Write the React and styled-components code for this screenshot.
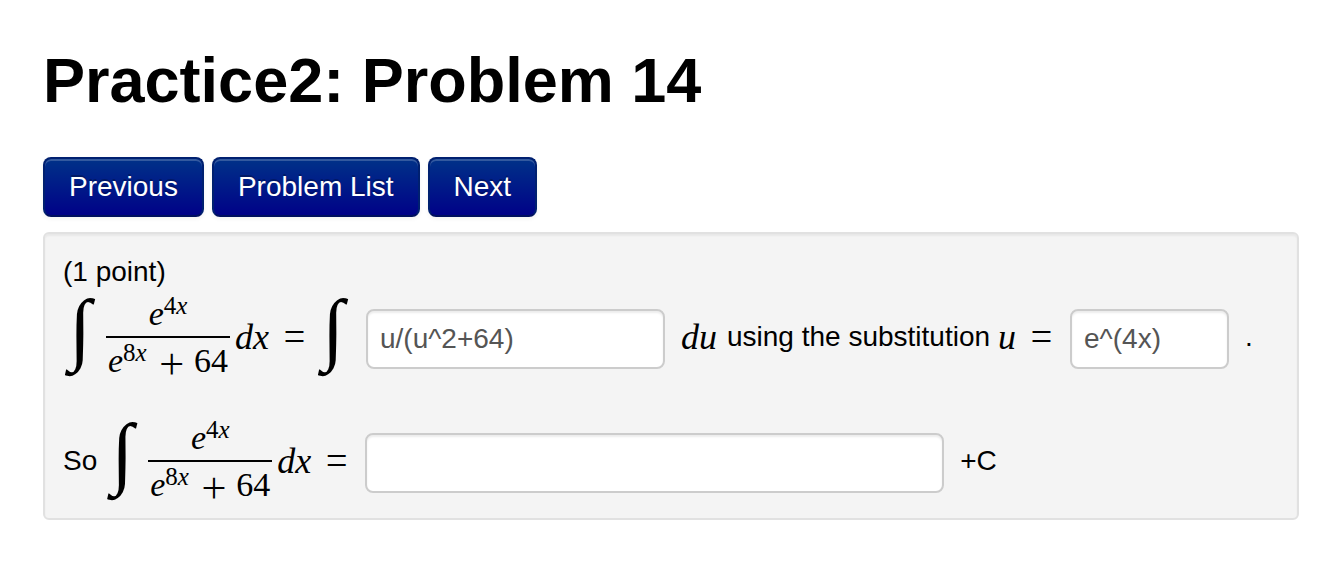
import styled, { createGlobalStyle } from 'styled-components';

const App = () => (
  <>
    <GlobalStyle />
    <Page>
      <Title>Practice2: Problem 14</Title>
      <Nav>
        <NavButton type="button">Previous</NavButton>
        <NavButton type="button">Problem List</NavButton>
        <NavButton type="button">Next</NavButton>
      </Nav>
      <Problem>
        <Points>(1 point)</Points>
        <Row>
          <Integrand />
          <Integral>∫</Integral>
          <Answer aria-label="Integrand in u" $width={299} defaultValue="u/(u^2+64)" />
          <Variable>du</Variable>
          <Words>using the substitution</Words>
          <Variable>u</Variable>
          <Operator>=</Operator>
          <Answer aria-label="Substitution for u" $width={159} defaultValue="e^(4x)" />
          <Words>.</Words>
        </Row>
        <Row>
          <Words>So</Words>
          <Integrand />
          <Answer aria-label="Antiderivative" $width={579} />
          <Words>+C</Words>
        </Row>
      </Problem>
    </Page>
  </>
);

export default App;

const Power = ({exponent}) => (
  <span><i>e</i><Sup>{exponent}<i>x</i></Sup></span>
)

const Integrand = () => (
  <Expression>
    <Integral>∫</Integral>
    <Fraction>
      <Numerator><Power exponent="4" /></Numerator>
      <Denominator>
        <Power exponent="8" />
        <Operator>+</Operator>
        <span>64</span>
      </Denominator>
    </Fraction>
    <Variable>dx</Variable>
    <Operator>=</Operator>
  </Expression>
)

const GlobalStyle = createGlobalStyle`
* {
  box-sizing: border-box;
}
body {
  margin: 0;
  background: #fff;
  color: #000;
  font-family: "Liberation Sans", Arial, sans-serif;
  font-size: 28px;
  line-height: 40px;
}
`
const Page = styled.main`
padding: 40px 35px 40px 43px;
`
const Title = styled.h1`
margin: 0 0 37px;
font-size: 63px;
line-height: 80px;
`
const Nav = styled.nav`
display: flex;
flex-wrap: wrap;
gap: 8px;
margin-bottom: 15px;
`
const NavButton = styled.button`
height: 60px;
padding: 0 24px;
border: 2px solid #002070;
border-bottom-color: #001060;
border-radius: 8px;
background: linear-gradient(#003388, #000088) border-box;
box-shadow: inset 0 2px 0 rgba(255, 255, 255, 0.2), 0 2px 4px rgba(0, 0, 0, 0.05);
color: #fff;
font: inherit;
text-shadow: 0 -2px 0 rgba(0, 0, 0, 0.25);
`
const Problem = styled.section`
padding: 18px 18px 12px;
border: 2px solid #e1e1e1;
border-radius: 6px;
background: #f4f4f4;
box-shadow: inset 0 2px 2px rgba(0, 0, 0, 0.05);
`
const Points = styled.div`
line-height: 40px;
`
const Row = styled.div`
display: flex;
flex-wrap: wrap;
align-items: center;
min-height: 90px;
& + & {
  margin-top: 34px;
}
`
const Words = styled.span`
margin-right: 8px;
`
const Expression = styled.div`
display: flex;
align-items: center;
`
const Integral = styled.i`
width: 34px;
padding-bottom: 18px;
font-family: "Liberation Serif", serif;
font-size: 80px;
line-height: 60px;
text-align: center;
${Expression} + & {
  margin-left: 9px;
}
`
const Fraction = styled.span`
display: flex;
flex-direction: column;
width: 124px;
margin: 0 5px 0 9px;
font-family: "Liberation Serif", serif;
font-size: 34px;
line-height: 38px;
`
const Numerator = styled.span`
height: 39px;
border-bottom: 2px solid #000;
text-align: center;
line-height: 30px;
`
const Denominator = styled.span`
display: flex;
justify-content: space-between;
height: 37px;
padding: 0 2px;
line-height: 46px;
`
const Sup = styled.sup`
font-size: 25px;
line-height: 0;
vertical-align: 11px;
`
const Variable = styled.i`
margin-right: 10px;
font-family: "Liberation Serif", serif;
font-size: 36px;
line-height: 40px;
`
const Operator = styled.span`
width: 28px;
padding-bottom: 8px;
font-family: Inter, sans-serif;
font-size: 48px;
font-weight: 200;
text-align: center;
`
const Answer = styled.input.attrs({ type: 'text' })`
width: ${props => props.$width}px;
height: 60px;
margin: 4px 16px 0;
padding: 0 12px;
border: 2px solid #ccc;
border-radius: 8px;
background: #fff;
box-shadow: inset 0 2px 2px rgba(0, 0, 0, 0.075);
color: #555;
font: inherit;
`
